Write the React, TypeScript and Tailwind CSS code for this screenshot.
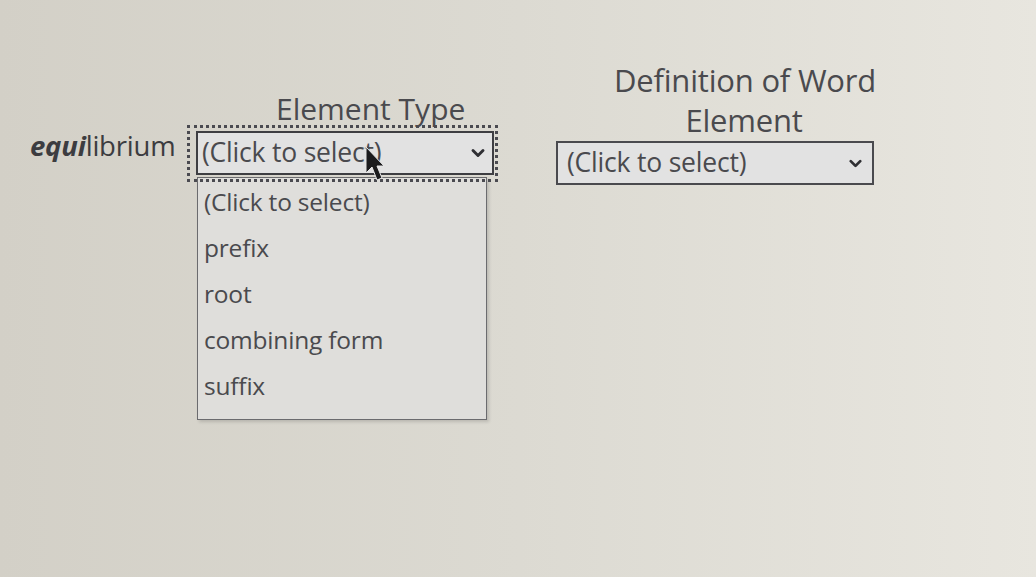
import { ChevronDown } from "lucide-react";

const options = ["(Click to select)", "prefix", "root", "combining form", "suffix"];

function Cursor() {
  return (
    <svg
      className="absolute left-[175px] top-[18px] w-[22px] h-[36px]"
      viewBox="0 0 22 36"
    >
      <path
        d="M1 1 L1 27 L7 21 L12 34 L17 32 L12 20 L19 20 Z"
        fill="#1b1b1d"
        stroke="#e5e5e5"
        strokeWidth="1"
      />
    </svg>
  );
}

export default function App() {
  return (
    <div
      className="w-full h-[577px] overflow-hidden bg-gradient-to-r from-[#d3d0c7] via-[#dcdad2] to-[#e8e6df] text-[#4a4a4e]"
      style={{ fontFamily: "'Open Sans', Lato, sans-serif" }}
    >
      <div className="flex items-start pt-[60px]">
        {/* word */}
        <div className="pt-[66px] pl-[30px] w-[187px] text-[27.5px] leading-[40px] tracking-[-0.2px] text-[#3c3c40] whitespace-nowrap">
          <span className="font-bold italic">equi</span>librium
        </div>

        {/* element type column */}
        <div className="flex flex-col w-[311px] mt-[30px]">
          <div className="pl-[89px] text-[30px] leading-[38px] whitespace-nowrap">Element Type</div>
          <div className="relative border-[3px] border-dotted border-[#4a4a50] pl-[6px] pr-[1px] pt-[3px] pb-[4px] -mt-[3px]">
            <div className="flex items-center justify-between h-[44px] border-2 border-[#3e3e42] bg-[#e2e2e2] pl-[4px] pr-[4px] text-[26.5px] tracking-[-0.2px] whitespace-nowrap">
              <span>(Click to select)</span>
              <ChevronDown className="w-[20px] h-[20px] text-[#2f2f33]" strokeWidth={3.5} />
            </div>
            <Cursor />
          </div>
          <div className="flex flex-col ml-[10px] w-[290px] -mt-[5px] pt-[1px] pb-[10px] border-[1.5px] border-[#6b6b6e] bg-[#dfdedb] shadow-[2px_2px_3px_rgba(0,0,0,0.15)] text-[24.5px] tracking-[-0.2px]">
            {options.map((o) => (
              <div key={o} className="h-[46px] flex items-center pl-[6px] whitespace-nowrap">
                {o}
              </div>
            ))}
          </div>
        </div>

        {/* definition column */}
        <div className="flex flex-col w-[318px] ml-[58px]">
          <div className="pl-[58px] text-center text-[31px] leading-[40px] tracking-[-0.2px] whitespace-nowrap">
            Definition of Word
            <br />
            Element
          </div>
          <div className="flex items-center justify-between h-[44px] mt-[1px] border-2 border-[#4a4a4e] bg-[#e2e2e2] pl-[9px] pr-[7px] text-[26.5px] tracking-[-0.2px] whitespace-nowrap">
            <span>(Click to select)</span>
            <ChevronDown className="w-[19px] h-[19px] text-[#2f2f33]" strokeWidth={3.5} />
          </div>
        </div>
      </div>
    </div>
  );
}
